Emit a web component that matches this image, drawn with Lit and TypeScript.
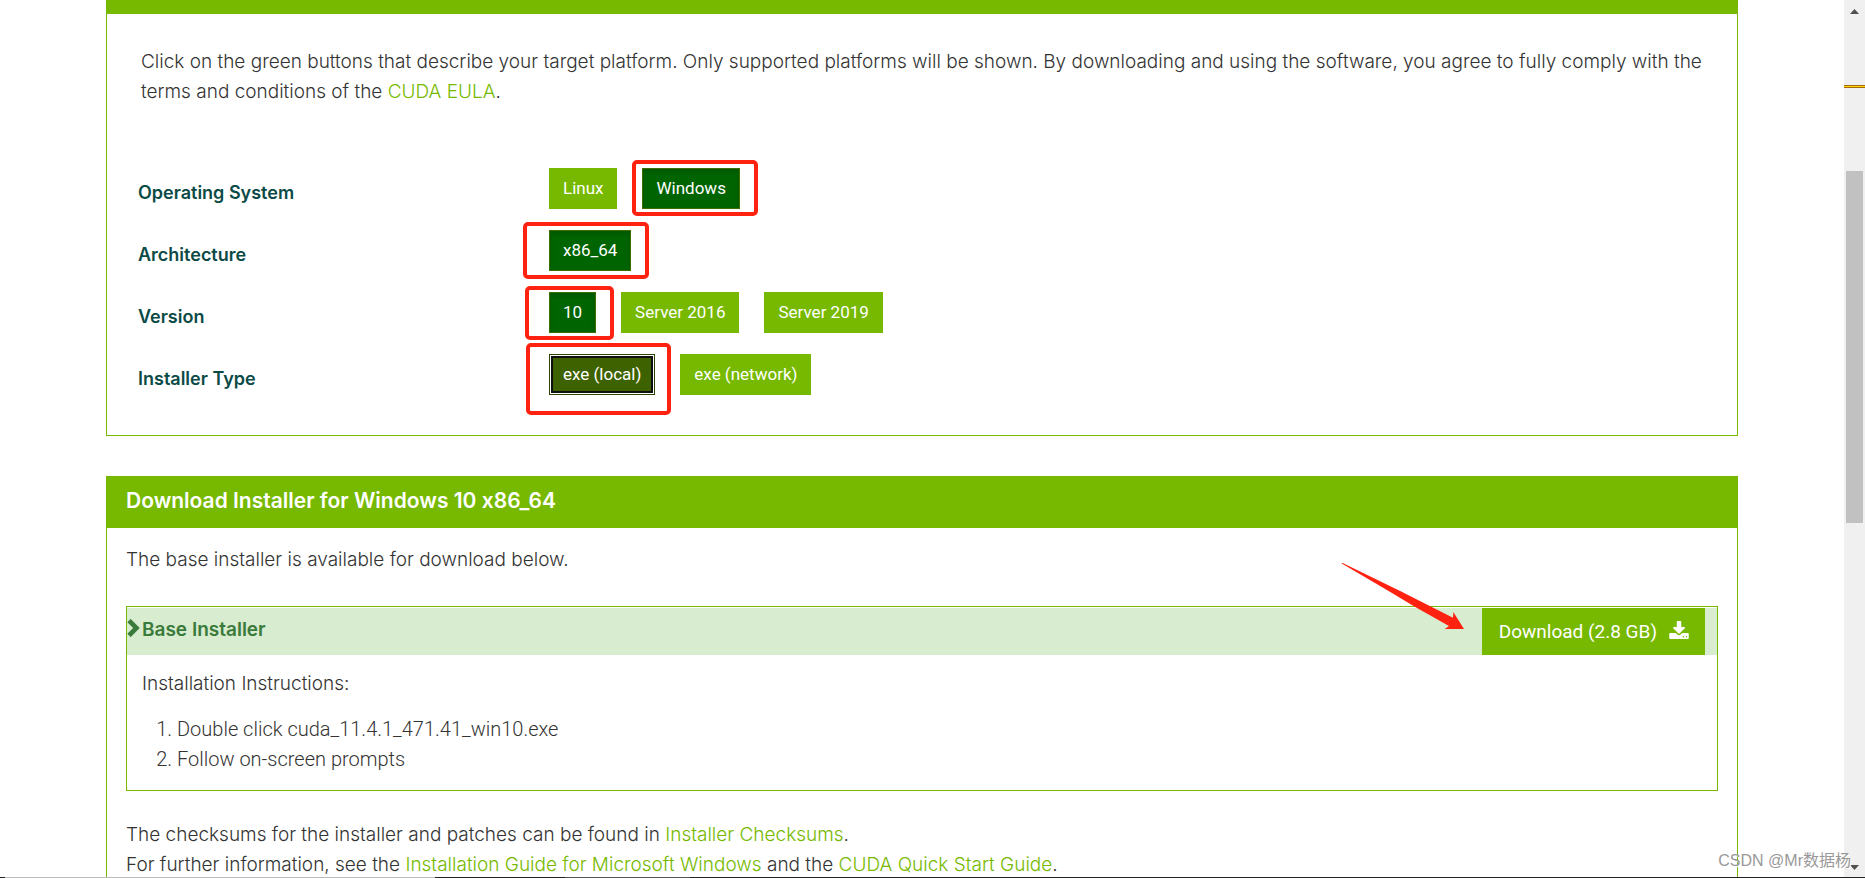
import { LitElement, html, css, svg, nothing } from "lit";
import { customElement, state } from "lit/decorators.js";
import { classMap } from "lit/directives/class-map.js";

interface Choice {
  id: string;
  text: string;
  mark?: string;
}
interface Row {
  label: string;
  choices: Choice[];
}

const ROWS: Row[] = [
  { label: "Operating System", choices: [{ id: "linux", text: "Linux" }, { id: "windows", text: "Windows", mark: "mark-os" }] },
  { label: "Architecture", choices: [{ id: "x86_64", text: "x86_64", mark: "mark-arch" }] },
  {
    label: "Version",
    choices: [
      { id: "10", text: "10", mark: "mark-version" },
      { id: "s2016", text: "Server 2016" },
      { id: "s2019", text: "Server 2019" },
    ],
  },
  {
    label: "Installer Type",
    choices: [{ id: "local", text: "exe (local)", mark: "mark-type" }, { id: "network", text: "exe (network)" }],
  },
];

const downloadIcon = svg`<path fill="currentColor" d="M1280 1344q0-26-19-45t-45-19-45 19-19 45 19 45 45 19 45-19 19-45zm256 0q0-26-19-45t-45-19-45 19-19 45 19 45 45 19 45-19 19-45zm128-224v320q0 40-28 68t-68 28h-1472q-40 0-68-28t-28-68v-320q0-40 28-68t68-28h465l135 136q58 56 136 56t136-56l136-136h464q40 0 68 28t28 68zm-325-569q17 41-14 70l-448 448q-18 19-45 19t-45-19l-448-448q-31-29-14-70 17-39 59-39h256v-448q0-26 19-45t45-19h256q26 0 45 19t19 45v448h256q42 0 59 39z"/>`;

@customElement("platform-picker")
class PlatformPicker extends LitElement {
  @state() private selected: string[] = ["windows", "x86_64", "10", "local"];

  static styles = css`
    :host {
      display: block;
    }
    .row {
      display: grid;
      grid-template-columns: 411px 1fr;
      align-items: start;
      min-height: 62px;
    }
    .label {
      font-size: 18px;
      font-weight: 600;
      line-height: 50px;
      height: 48px;
      color: #0b4a46;
    }
    .choices {
      display: flex;
      flex-wrap: wrap;
      gap: 25px;
    }
    .choice {
      position: relative;
    }
    button {
      display: block;
      height: 41px;
      padding: 0 13px;
      border: 1px solid #76b900;
      background: #76b900;
      color: #fff;
      font: 400 17px/37px Roboto, "Liberation Sans", sans-serif;
      cursor: pointer;
    }
    button.on {
      background: #006400;
      border-color: #3f6f00;
      box-shadow: inset 0 3px 5px rgba(0, 0, 0, 0.125);
    }
    button.on.focused {
      background: #3f6200;
      border-color: #2d4600;
      box-shadow: inset 0 0 0 1px #fff;
      outline: 2px solid #101010;
      outline-offset: -4px;
    }
    .mark {
      position: absolute;
      border: 4px solid #ff2211;
      border-radius: 5px;
      pointer-events: none;
    }
    .mark-os {
      inset: -8px -18px -7px -10px;
    }
    .mark-arch {
      inset: -8px -18px -8px -26px;
    }
    .mark-version {
      inset: -6px -18px -7px -24px;
    }
    .mark-type {
      inset: -11px -16px -20px -23px;
    }
  `;

  private pick(row: number, id: string) {
    this.selected = this.selected.map((s, i) => (i === row ? id : s));
  }

  render() {
    return ROWS.map(
      (row, r) => html`
        <div class="row" role="group" aria-labelledby="label-${r}">
          <div class="label" id="label-${r}">${row.label}</div>
          <div class="choices">
            ${row.choices.map((c) => {
              const on = this.selected[r] === c.id;
              return html`<div class="choice">
                <button
                  type="button"
                  aria-pressed=${on ? "true" : "false"}
                  class=${classMap({ on, focused: on && r === ROWS.length - 1 })}
                  @click=${() => this.pick(r, c.id)}
                >${c.text}</button>
                ${c.mark ? html`<span class="mark ${c.mark}"></span>` : nothing}
              </div>`;
            })}
          </div>
        </div>
      `
    );
  }
}

@customElement("base-installer")
class BaseInstaller extends LitElement {
  static styles = css`
    :host {
      display: block;
      border: 1px solid #76b900;
      padding-top: 1px;
    }
    .band {
      display: flex;
      justify-content: space-between;
      align-items: flex-start;
      background: #d8ecd0;
      padding-right: 12px;
    }
    .title {
      display: flex;
      align-items: center;
      gap: 2px;
      margin: 0;
      font-size: 19px;
      font-weight: 600;
      line-height: 43px;
      color: #3a7a3a;
    }
    .chevron {
      width: 13px;
      height: 18px;
      margin-bottom: 3px;
    }
    .download {
      position: relative;
      display: flex;
      align-items: center;
      gap: 12px;
      height: 47px;
      padding: 0 16px 0 17px;
      background: #76b900;
      color: #fff;
      font: 400 19px/47px Roboto, "Liberation Sans", sans-serif;
      text-decoration: none;
    }
    .download-icon {
      width: 20px;
      height: 18px;
      margin-bottom: 4px;
    }
    .arrow {
      position: absolute;
      right: 100%;
      bottom: 25px;
      width: 123px;
      height: 67px;
      margin-right: 18px;
      pointer-events: none;
    }
    .body {
      padding: 14px 15px 16px;
    }
    p {
      margin: 0 0 15px;
    }
    ol {
      margin: 0;
      padding-left: 35px;
      font-family: Roboto, "Liberation Sans", sans-serif;
      font-size: 20px;
    }
  `;

  render() {
    return html`
      <div class="band">
        <h3 class="title">
          <svg class="chevron" viewBox="0 0 13 18" aria-hidden="true">
            <path d="M2 1.5 L9.5 9 L2 16.5" fill="none" stroke="currentColor" stroke-width="4.6" />
          </svg>
          <span>Base Installer</span>
        </h3>
        <a class="download" href="#download">
          <span>Download (2.8 GB)</span>
          <svg class="download-icon" viewBox="0 0 1664 1536" aria-hidden="true">${downloadIcon}</svg>
          <svg class="arrow" viewBox="121 68 369 201" aria-hidden="true">
            <path fill="#ff2211" d="M122 69 L126 68 L300 153 L457 232 L458 215 L490 266 L432 266 L445 257 L345 201 L260 150 Z" />
          </svg>
        </a>
      </div>
      <div class="body">
        <p>Installation Instructions:</p>
        <ol>
          <li>Double click cuda_11.4.1_471.41_win10.exe</li>
          <li>Follow on-screen prompts</li>
        </ol>
      </div>
    `;
  }
}

@customElement("app-root")
class AppRoot extends LitElement {
  static styles = css`
    :host {
      position: relative;
      display: flex;
      height: 100vh;
      overflow: hidden;
      background: #fff;
      color: #333;
      font: 300 19px/30px Inter, "Liberation Sans", sans-serif;
      font-variant-ligatures: no-contextual;
    }
    main {
      flex: 1;
      min-width: 0;
      padding: 0 106px;
      overflow: hidden;
    }
    .panel {
      border: 1px solid #76b900;
      border-top: 0;
      margin-bottom: 40px;
    }
    .bar {
      height: 14px;
      background: #76b900;
    }
    .heading {
      margin: 0;
      padding: 0 19px 2px;
      background: #76b900;
      color: #fff;
      font-size: 21px;
      font-weight: 600;
      line-height: 50px;
    }
    .select {
      padding: 33px 31px 19px;
    }
    .select p {
      padding: 0 3px;
      margin: 0 0 61px;
    }
    .installer {
      padding: 17px 19px;
    }
    p {
      margin: 0;
    }
    base-installer {
      margin: 31px 0 29px;
    }
    a {
      color: #76b900;
      text-decoration: none;
    }
    .scroll {
      display: flex;
      flex-direction: column;
      justify-content: space-between;
      align-items: center;
      width: 21px;
      background: #f0f0f0;
      position: relative;
    }
    .scroll svg {
      width: 9px;
      height: 5px;
      margin: 9px 0 8px;
    }
    .thumb {
      position: absolute;
      top: 171px;
      left: 2px;
      width: 17px;
      height: 352px;
      background: #c1c1c1;
    }
    .find {
      position: absolute;
      top: 85px;
      left: 0;
      right: 0;
      height: 1px;
      background: #ffd800;
      border: solid #a86a10;
      border-width: 1px 0;
    }
    .watermark {
      position: absolute;
      right: 14px;
      bottom: 2px;
      color: #999;
      text-shadow: 1px 1px 0 #fff;
      font: 400 16px/30px "Liberation Sans", "Noto Sans CJK SC", sans-serif;
    }
    .edge {
      position: absolute;
      left: 0;
      right: 0;
      bottom: 0;
      height: 1px;
      background: linear-gradient(90deg, #222 5px, #bbb 5px 435px, #222 435px 565px, #555 565px 690px, #222 690px);
    }
  `;

  render() {
    return html`
      <main>
        <section class="panel">
          <div class="bar"></div>
          <div class="select">
            <p>
              Click on the green buttons that describe your target platform. Only supported platforms will be shown. By
              downloading and using the software, you agree to fully comply with the terms and conditions of the
              <a href="#eula">CUDA EULA</a>.
            </p>
            <platform-picker></platform-picker>
          </div>
        </section>
        <section class="panel">
          <h2 class="heading">Download Installer for Windows 10 x86_64</h2>
          <div class="installer">
            <p>The base installer is available for download below.</p>
            <base-installer></base-installer>
            <p>
              The checksums for the installer and patches can be found in <a href="#checksums">Installer Checksums</a>.
            </p>
            <p>
              For further information, see the <a href="#guide">Installation Guide for Microsoft Windows</a> and the
              <a href="#quick">CUDA Quick Start Guide</a>.
            </p>
          </div>
        </section>
      </main>
      <div class="scroll" aria-hidden="true">
        <svg viewBox="0 0 9 5"><path d="M0 5 L4.5 0 L9 5 Z" fill="#505050" /></svg>
        <div class="find"></div>
        <div class="thumb"></div>
        <svg viewBox="0 0 9 5"><path d="M0 0 L4.5 5 L9 0 Z" fill="#505050" /></svg>
      </div>
      <div class="watermark">CSDN @Mr数据杨</div>
      <div class="edge"></div>
    `;
  }
}
